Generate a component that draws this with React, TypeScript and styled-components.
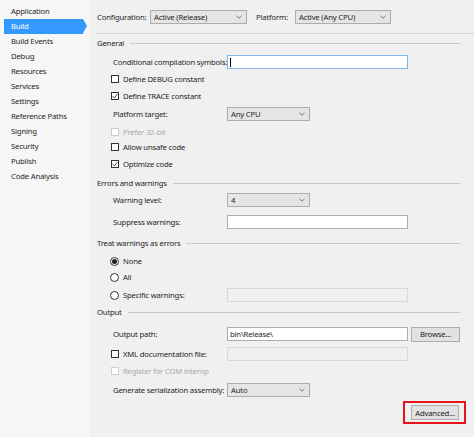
import React from "react";
import styled, { createGlobalStyle } from "styled-components";

const GlobalStyle = createGlobalStyle`
  html, body {
    margin: 0;
    padding: 0;
  }
  body {
    background: #f0f0f0;
    font-family: "Noto Sans", "Open Sans", sans-serif;
    font-size: 7.7px;
    letter-spacing: -0.18px;
    color: #1e1e1e;
  }
`;

const Page = styled.div`
  display: flex;
  width: 474px;
  height: 437px;
  overflow: hidden;
  background: #f0f0f0;
`;

const Sidebar = styled.nav`
  flex: none;
  width: 90px;
  padding-top: 4px;
  background: #f6f6f6;
`;

const NavItem = styled.div<{ $active?: boolean }>`
  position: relative;
  width: 79px;
  height: 15px;
  line-height: 15px;
  margin-left: 4px;
  padding-left: 7px;
  box-sizing: border-box;
  white-space: nowrap;
  color: ${(p) => (p.$active ? "#fff" : "#1e1e1e")};
  background: ${(p) => (p.$active ? "#3399ff" : "transparent")};

  &::after {
    content: "";
    display: ${(p) => (p.$active ? "block" : "none")};
    position: absolute;
    right: -4px;
    top: 0;
    border-left: 4px solid #3399ff;
    border-top: 7.5px solid transparent;
    border-bottom: 7.5px solid transparent;
  }
`;

const Main = styled.main`
  flex: 1;
  margin-left: 6px;
`;

const TopBar = styled.div`
  display: flex;
  align-items: center;
  height: 33px;
  padding-left: 1px;
  border-bottom: 1px solid #d4d4d4;
`;

const TopLabel = styled.span<{ $w: number; $ml?: number }>`
  width: ${(p) => p.$w}px;
  margin-left: ${(p) => p.$ml ?? 0}px;
  flex: none;
  white-space: nowrap;
`;

const Sections = styled.div`
  padding-right: 14px;
`;

const SectionHeader = styled.div<{ $mt: number }>`
  display: flex;
  align-items: center;
  height: 14px;
  margin-top: ${(p) => p.$mt}px;
  padding-left: 1px;
  white-space: nowrap;

  &::after {
    content: "";
    flex: 1;
    height: 1px;
    margin-left: 6px;
    background: #c8c8c8;
  }
`;

const Row = styled.div<{ $mt: number; $indent?: number }>`
  display: flex;
  align-items: center;
  height: 14px;
  margin-top: ${(p) => p.$mt}px;
  padding-left: ${(p) => p.$indent ?? 17}px;
`;

const FieldLabel = styled.span`
  flex: none;
  width: 114px;
  white-space: nowrap;
`;

const Combo = styled.div<{ $w: number }>`
  display: flex;
  align-items: center;
  justify-content: space-between;
  flex: none;
  width: ${(p) => p.$w}px;
  height: 14px;
  padding: 0 4px 0 3px;
  box-sizing: border-box;
  background: #e5e5e5;
  border: 1px solid #acacac;
  white-space: nowrap;
`;

const TextBox = styled.div<{ $focused?: boolean; $disabled?: boolean }>`
  display: flex;
  align-items: center;
  flex: none;
  width: 181px;
  height: 14px;
  padding-left: 2px;
  box-sizing: border-box;
  background: ${(p) => (p.$disabled ? "#f0f0f0" : "#fff")};
  border: 1px solid
    ${(p) => (p.$focused ? "#7eb4ea" : p.$disabled ? "#d9d9d9" : "#acacac")};
  white-space: nowrap;
`;

const Caret = styled.span`
  width: 1px;
  height: 9px;
  background: #000;
`;

const Button = styled.div<{ $w: number; $ml?: number }>`
  display: flex;
  align-items: center;
  justify-content: center;
  flex: none;
  width: ${(p) => p.$w}px;
  height: 15px;
  margin-left: ${(p) => p.$ml ?? 0}px;
  box-sizing: border-box;
  background: #e1e1e1;
  border: 1px solid #adadad;
  white-space: nowrap;
`;

const CheckWrap = styled.span<{ $w?: number; $disabled?: boolean }>`
  display: flex;
  align-items: center;
  gap: 4px;
  flex: none;
  width: ${(p) => (p.$w ? `${p.$w}px` : "auto")};
  white-space: nowrap;
  color: ${(p) => (p.$disabled ? "#a8a8a8" : "#1e1e1e")};
`;

const Box = styled.span<{ $disabled?: boolean }>`
  display: flex;
  align-items: center;
  justify-content: center;
  flex: none;
  width: 8px;
  height: 8px;
  box-sizing: border-box;
  background: #fff;
  border: 1px solid ${(p) => (p.$disabled ? "#cccccc" : "#333333")};
`;

const Radio = styled.span<{ $on?: boolean }>`
  display: flex;
  align-items: center;
  justify-content: center;
  flex: none;
  width: 9px;
  height: 9px;
  box-sizing: border-box;
  border: 1px solid #333;
  border-radius: 50%;
  background: #fff;

  &::after {
    content: "";
    display: ${(p) => (p.$on ? "block" : "none")};
    width: 5px;
    height: 5px;
    border-radius: 50%;
    background: #1e1e1e;
  }
`;

const ActionRow = styled.div`
  display: flex;
  justify-content: flex-end;
  margin-top: 4px;
  margin-right: -6px;
`;

const Highlight = styled.div`
  display: flex;
  padding: 2px 5px 2px 6px;
  border: 2px solid #e3141b;
`;

const Chevron = () => (
  <svg width="6" height="4" viewBox="0 0 6 4">
    <path d="M0.5 0.8 L3 3.2 L5.5 0.8" fill="none" stroke="#6d6d6d" strokeWidth="0.9" />
  </svg>
);

const Tick = () => (
  <svg width="6" height="6" viewBox="0 0 6 6">
    <path d="M0.6 3.1 L2.4 4.9 L5.5 1" fill="none" stroke="#333" strokeWidth="0.9" />
  </svg>
);

const Check: React.FC<{
  label: string;
  checked?: boolean;
  disabled?: boolean;
  width?: number;
}> = ({ label, checked, disabled, width }) => (
  <CheckWrap $w={width} $disabled={disabled}>
    <Box $disabled={disabled}>{checked && <Tick />}</Box>
    {label}
  </CheckWrap>
);

const navItems = [
  "Application",
  "Build",
  "Build Events",
  "Debug",
  "Resources",
  "Services",
  "Settings",
  "Reference Paths",
  "Signing",
  "Security",
  "Publish",
  "Code Analysis",
];

export default function App() {
  return (
    <Page>
      <GlobalStyle />
      <Sidebar>
        {navItems.map((n) => (
          <NavItem key={n} $active={n === "Build"}>
            {n}
          </NavItem>
        ))}
      </Sidebar>
      <Main>
        <TopBar>
          <TopLabel $w={53}>Configuration:</TopLabel>
          <Combo $w={97}>
            Active (Release)
            <Chevron />
          </Combo>
          <TopLabel $w={39} $ml={9}>
            Platform:
          </TopLabel>
          <Combo $w={96}>
            Active (Any CPU)
            <Chevron />
          </Combo>
        </TopBar>
        <Sections>
          <SectionHeader $mt={2}>General</SectionHeader>
          <Row $mt={5}>
            <FieldLabel>Conditional compilation symbols:</FieldLabel>
            <TextBox $focused>
              <Caret />
            </TextBox>
          </Row>
          <Row $mt={3} $indent={15}>
            <Check label="Define DEBUG constant" />
          </Row>
          <Row $mt={3} $indent={15}>
            <Check label="Define TRACE constant" checked />
          </Row>
          <Row $mt={4}>
            <FieldLabel>Platform target:</FieldLabel>
            <Combo $w={83}>
              Any CPU
              <Chevron />
            </Combo>
          </Row>
          <Row $mt={4} $indent={15}>
            <Check label="Prefer 32-bit" disabled />
          </Row>
          <Row $mt={1} $indent={15}>
            <Check label="Allow unsafe code" />
          </Row>
          <Row $mt={3} $indent={15}>
            <Check label="Optimize code" checked />
          </Row>

          <SectionHeader $mt={5}>Errors and warnings</SectionHeader>
          <Row $mt={3}>
            <FieldLabel>Warning level:</FieldLabel>
            <Combo $w={83}>
              4
              <Chevron />
            </Combo>
          </Row>
          <Row $mt={8}>
            <FieldLabel>Suppress warnings:</FieldLabel>
            <TextBox />
          </Row>

          <SectionHeader $mt={7}>Treat warnings as errors</SectionHeader>
          <Row $mt={4} $indent={14}>
            <CheckWrap>
              <Radio $on />
              None
            </CheckWrap>
          </Row>
          <Row $mt={2} $indent={14}>
            <CheckWrap>
              <Radio />
              All
            </CheckWrap>
          </Row>
          <Row $mt={4} $indent={14}>
            <CheckWrap $w={117}>
              <Radio />
              Specific warnings:
            </CheckWrap>
            <TextBox $disabled />
          </Row>

          <SectionHeader $mt={3}>Output</SectionHeader>
          <Row $mt={8}>
            <FieldLabel>Output path:</FieldLabel>
            <TextBox>bin\Release\</TextBox>
            <Button $w={49} $ml={3}>
              Browse...
            </Button>
          </Row>
          <Row $mt={6} $indent={15}>
            <Check label="XML documentation file:" width={116} />
            <TextBox $disabled />
          </Row>
          <Row $mt={3} $indent={15}>
            <Check label="Register for COM interop" disabled />
          </Row>
          <Row $mt={5}>
            <FieldLabel>Generate serialization assembly:</FieldLabel>
            <Combo $w={83}>
              Auto
              <Chevron />
            </Combo>
          </Row>
          <ActionRow>
            <Highlight>
              <Button $w={48}>Advanced...</Button>
            </Highlight>
          </ActionRow>
        </Sections>
      </Main>
    </Page>
  );
}
